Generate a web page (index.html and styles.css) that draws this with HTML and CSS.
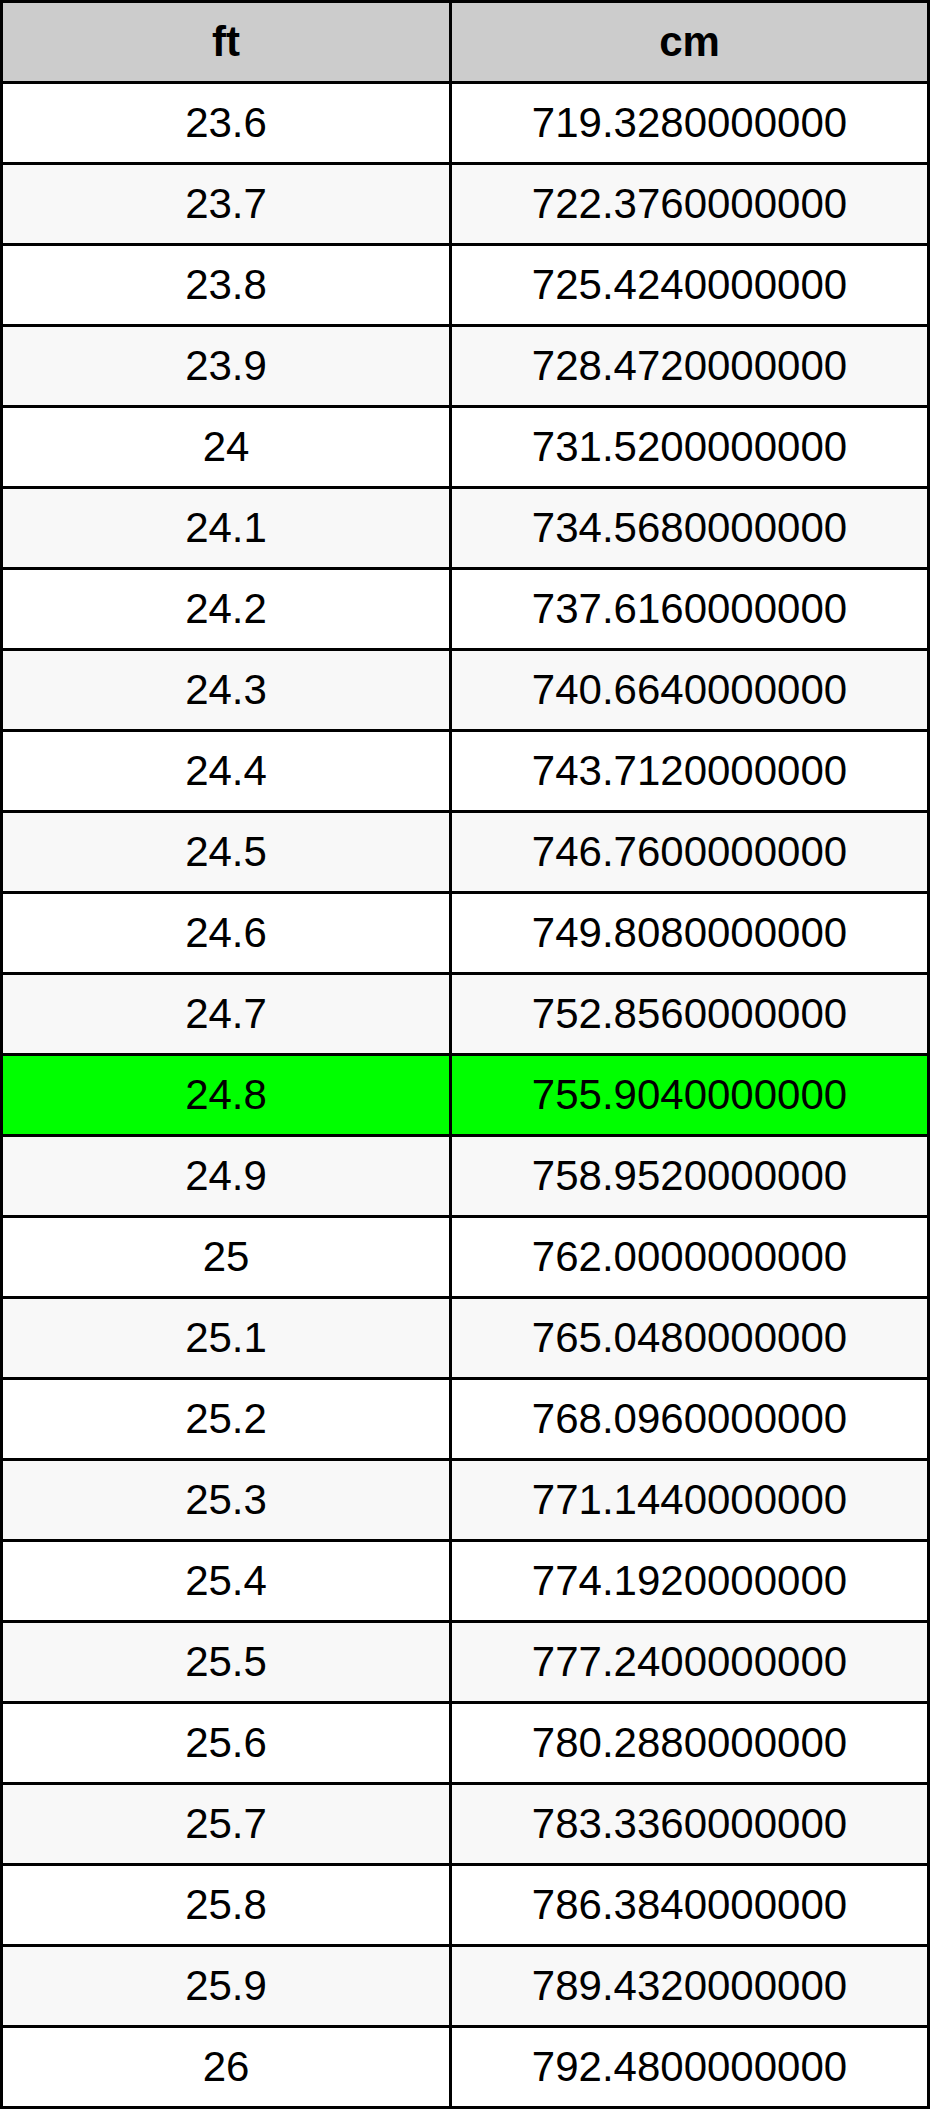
FILE: index.html
```html
<!DOCTYPE html>
<html>
<head>
<meta charset="utf-8">
<title>ft to cm</title>
<link rel="stylesheet" href="styles.css">
</head>
<body>
<table class="conv">
<thead>
<tr><th class="ft">ft</th><th class="cm">cm</th></tr>
</thead>
<tbody>
<tr><td class="ft">23.6</td><td class="cm">719.3280000000</td></tr>
<tr><td class="ft">23.7</td><td class="cm">722.3760000000</td></tr>
<tr><td class="ft">23.8</td><td class="cm">725.4240000000</td></tr>
<tr><td class="ft">23.9</td><td class="cm">728.4720000000</td></tr>
<tr><td class="ft">24</td><td class="cm">731.5200000000</td></tr>
<tr><td class="ft">24.1</td><td class="cm">734.5680000000</td></tr>
<tr><td class="ft">24.2</td><td class="cm">737.6160000000</td></tr>
<tr><td class="ft">24.3</td><td class="cm">740.6640000000</td></tr>
<tr><td class="ft">24.4</td><td class="cm">743.7120000000</td></tr>
<tr><td class="ft">24.5</td><td class="cm">746.7600000000</td></tr>
<tr><td class="ft">24.6</td><td class="cm">749.8080000000</td></tr>
<tr><td class="ft">24.7</td><td class="cm">752.8560000000</td></tr>
<tr class="hl"><td class="ft">24.8</td><td class="cm">755.9040000000</td></tr>
<tr><td class="ft">24.9</td><td class="cm">758.9520000000</td></tr>
<tr><td class="ft">25</td><td class="cm">762.0000000000</td></tr>
<tr><td class="ft">25.1</td><td class="cm">765.0480000000</td></tr>
<tr><td class="ft">25.2</td><td class="cm">768.0960000000</td></tr>
<tr><td class="ft">25.3</td><td class="cm">771.1440000000</td></tr>
<tr><td class="ft">25.4</td><td class="cm">774.1920000000</td></tr>
<tr><td class="ft">25.5</td><td class="cm">777.2400000000</td></tr>
<tr><td class="ft">25.6</td><td class="cm">780.2880000000</td></tr>
<tr><td class="ft">25.7</td><td class="cm">783.3360000000</td></tr>
<tr><td class="ft">25.8</td><td class="cm">786.3840000000</td></tr>
<tr><td class="ft">25.9</td><td class="cm">789.4320000000</td></tr>
<tr><td class="ft">26</td><td class="cm">792.4800000000</td></tr>
</tbody>
</table>
</body>
</html>
```

FILE: styles.css
```css
html, body {
  margin: 0;
  padding: 0;
  background: #ffffff;
}

.conv {
  border-collapse: separate;
  border-spacing: 0;
  border-top: 3px solid #000;
  border-left: 3px solid #000;
  width: 930px;
  font-family: "Liberation Sans", Arial, sans-serif;
  font-size: 42px;
  color: #000;
}

.conv th,
.conv td {
  padding: 0;
  height: 78px;
  line-height: 78px;
  text-align: center;
  vertical-align: middle;
  border-right: 3px solid #000;
  border-bottom: 3px solid #000;
  white-space: nowrap;
}

.conv th {
  background: #cccccc;
  font-weight: bold;
}

.conv .ft {
  width: 446px;
}

.conv .cm {
  width: 475px;
}

.conv tbody tr:nth-child(odd) td {
  background: #ffffff;
}

.conv tbody tr:nth-child(even) td {
  background: #f8f8f8;
}

.conv tbody tr.hl td {
  background: #00ff00;
}
```
